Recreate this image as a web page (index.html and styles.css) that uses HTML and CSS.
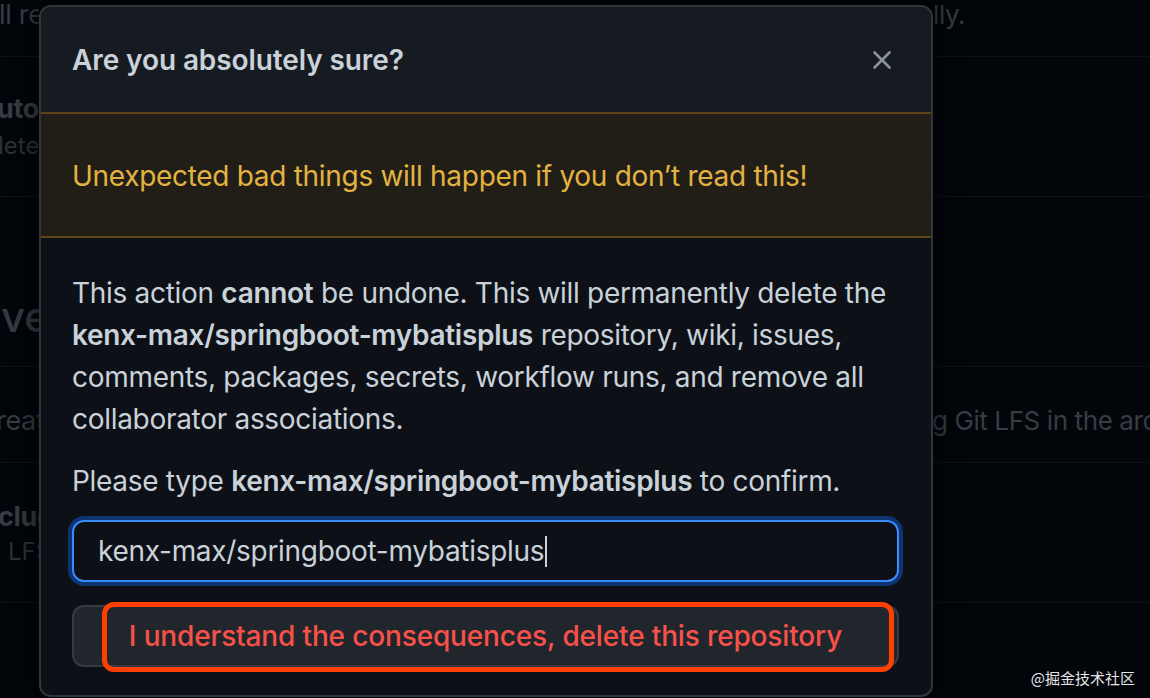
FILE: index.html
```html
<!DOCTYPE html>
<html lang="en">
<head>
<meta charset="utf-8">
<title>Delete repository</title>
<link rel="stylesheet" href="styles.css">
</head>
<body>
<div class="page">
  <div class="row row1">
    <div class="cell-l"><span class="bg-text">ll repositories</span></div>
    <div class="cell-m"></div>
    <div class="cell-r"><span class="bg-text r1">lly.</span></div>
  </div>
  <div class="row row2">
    <div class="cell-l">
      <div class="bg-text bold">utors</div>
      <div class="bg-desc">lete</div>
    </div>
    <div class="cell-m"></div>
    <div class="cell-r"></div>
  </div>
  <div class="row row3">
    <div class="cell-l"><span class="bg-heading">ves</span></div>
    <div class="cell-m"></div>
    <div class="cell-r"></div>
  </div>
  <div class="row row4">
    <div class="cell-l"><span class="bg-text reat">reate</span></div>
    <div class="cell-m"></div>
    <div class="cell-r"><span class="bg-text r4">g Git LFS in the archives</span></div>
  </div>
  <div class="row row5">
    <div class="cell-l">
      <div class="bg-text bold">clude</div>
      <div class="bg-desc lfs">LFS</div>
    </div>
    <div class="cell-m"></div>
    <div class="cell-r"></div>
  </div>
  <div class="row row6"></div>
</div>

<div class="dialog" role="dialog">
  <header class="dlg-head">
    <h2 class="dlg-title">Are you absolutely sure?</h2>
    <button class="dlg-close" aria-label="Close">
      <svg width="20" height="20" viewBox="0 0 20 20"><path d="M2.5 2.5 17.5 17.5M17.5 2.5 2.5 17.5" stroke="#8b949e" stroke-width="2.6" stroke-linecap="round" fill="none"/></svg>
    </button>
  </header>
  <div class="flash">Unexpected bad things will happen if you don’t read this!</div>
  <div class="dlg-body">
    <p class="para">This action <b>cannot</b> be undone. This will permanently delete the <b>kenx-max/springboot-mybatisplus</b> repository, wiki, issues, comments, packages, secrets, workflow runs, and remove all collaborator associations.</p>
    <p class="para confirm">Please type <b>kenx-max/springboot-mybatisplus</b> to confirm.</p>
    <div class="input"><span class="input-text">kenx-max/springboot-mybatisplus</span><span class="caret"></span></div>
    <div class="btn-wrap">
      <button class="btn-danger">I understand the consequences, delete this repository</button>
      <span class="annot"></span>
    </div>
  </div>
</div>

<div class="watermark">@掘金技术社区</div>
</body>
</html>
```

FILE: styles.css
```css
* { box-sizing: border-box; }
html, body {
  margin: 0;
  padding: 0;
  width: 1150px;
  height: 698px;
  overflow: hidden;
  background: #02050a;
  font-family: "Inter", "Noto Sans", sans-serif;
}
body { position: relative; }

.page { width: 1150px; }
.row {
  display: grid;
  grid-template-columns: 39px 894px 1fr;
  border-bottom: 1px solid #0e1117;
}
.cell-l, .cell-r { overflow: hidden; white-space: nowrap; }
.bg-text {
  display: block;
  font-size: 27px;
  line-height: 30px;
  letter-spacing: -0.3px;
  color: #383c43;
}
.cell-r .bg-text { font-size: 26px; letter-spacing: -0.4px; }
.bg-text.bold { font-weight: 700; }
.bg-desc {
  font-size: 24px;
  line-height: 28px;
  color: #2d3137;
}
.bg-heading {
  display: block;
  font-size: 42px;
  line-height: 50px;
  font-weight: 500;
  color: #363a41;
}
.row1 { height: 57px; }
.row1 .bg-text { margin-top: 0; margin-left: -1px; }
.row1 .bg-text.r1 { margin-left: 0; }
.row2 { height: 140px; padding-top: 37px; }
.row2 .bg-text { margin-left: -3px; }
.row2 .bg-desc { margin-top: 8px; margin-left: -2px; }
.row3 { height: 170px; padding-top: 95px; }
.row3 .bg-heading { margin-left: 1px; }
.row4 { height: 96px; padding-top: 39px; }
.bg-text.reat { margin-left: -4px; }
.bg-text.r4 { margin-left: -1px; }
.row5 { height: 140px; padding-top: 39px; }
.row5 .bg-text { margin-left: -2px; }
.row5 .bg-desc { margin-top: 6px; }
.bg-desc.lfs { margin-left: 8px; }
.row6 { border-bottom: none; }

.dialog {
  position: absolute;
  left: 39px;
  top: 5px;
  width: 894px;
  background: #0d1117;
  border: 2px solid #30363d;
  border-radius: 12px;
  overflow: hidden;
  box-shadow: 0 0 24px 6px rgba(0,0,0,0.55);
  color: #c9d1d9;
  letter-spacing: -0.3px;
}
.dlg-head {
  display: flex;
  align-items: center;
  justify-content: space-between;
  background: #161b22;
  padding: 32px 32px 31px 31px;
}
.dlg-title {
  margin: 0;
  font-size: 28px;
  line-height: 42px;
  font-weight: 600;
  color: #c9d1d9;
  letter-spacing: -0.1px;
}
.dlg-close {
  background: none;
  border: 0;
  padding: 0;
  width: 20px;
  height: 20px;
  margin-right: 7px;
  display: flex;
}
.flash {
  background: #211e18;
  border-top: 2px solid #5f4515;
  border-bottom: 2px solid #5f4515;
  padding: 41px 31px 39px;
  font-size: 28px;
  line-height: 42px;
  color: #e3b341;
}
.dlg-body {
  padding: 34px 32px 28px 31px;
}
.para {
  margin: 0 0 20px;
  font-size: 28px;
  line-height: 42px;
  color: #c9d1d9;
}
.para b { font-weight: 600; }
.para.confirm { margin-bottom: 18px; }
.input {
  height: 62px;
  border: 2px solid #388bfd;
  border-radius: 12px;
  box-shadow: 0 0 0 4px #0d3470;
  background: #0d1117;
  padding-left: 24px;
  display: flex;
  align-items: center;
  font-size: 28px;
  color: #c9d1d9;
}
.caret {
  display: inline-block;
  width: 2px;
  height: 31px;
  background: #c9d1d9;
  margin-left: 1px;
}
.btn-wrap {
  position: relative;
  margin-top: 23px;
}
.btn-danger {
  display: block;
  width: 100%;
  height: 62px;
  background: #21262d;
  border: 2px solid #363b42;
  border-radius: 12px;
  font-family: inherit;
  font-size: 28px;
  font-weight: 500;
  letter-spacing: -0.15px;
  color: #f85149;
  text-align: center;
}
.annot {
  position: absolute;
  left: 30px;
  right: 5px;
  top: -3px;
  bottom: -5px;
  border: 5px solid #ff4000;
  border-radius: 12px;
}
.watermark {
  position: absolute;
  right: 15px;
  bottom: 11px;
  font-family: "Noto Sans CJK SC", "Noto Sans", sans-serif;
  font-size: 15px;
  line-height: 18px;
  color: #e6e6e6;
}
```
